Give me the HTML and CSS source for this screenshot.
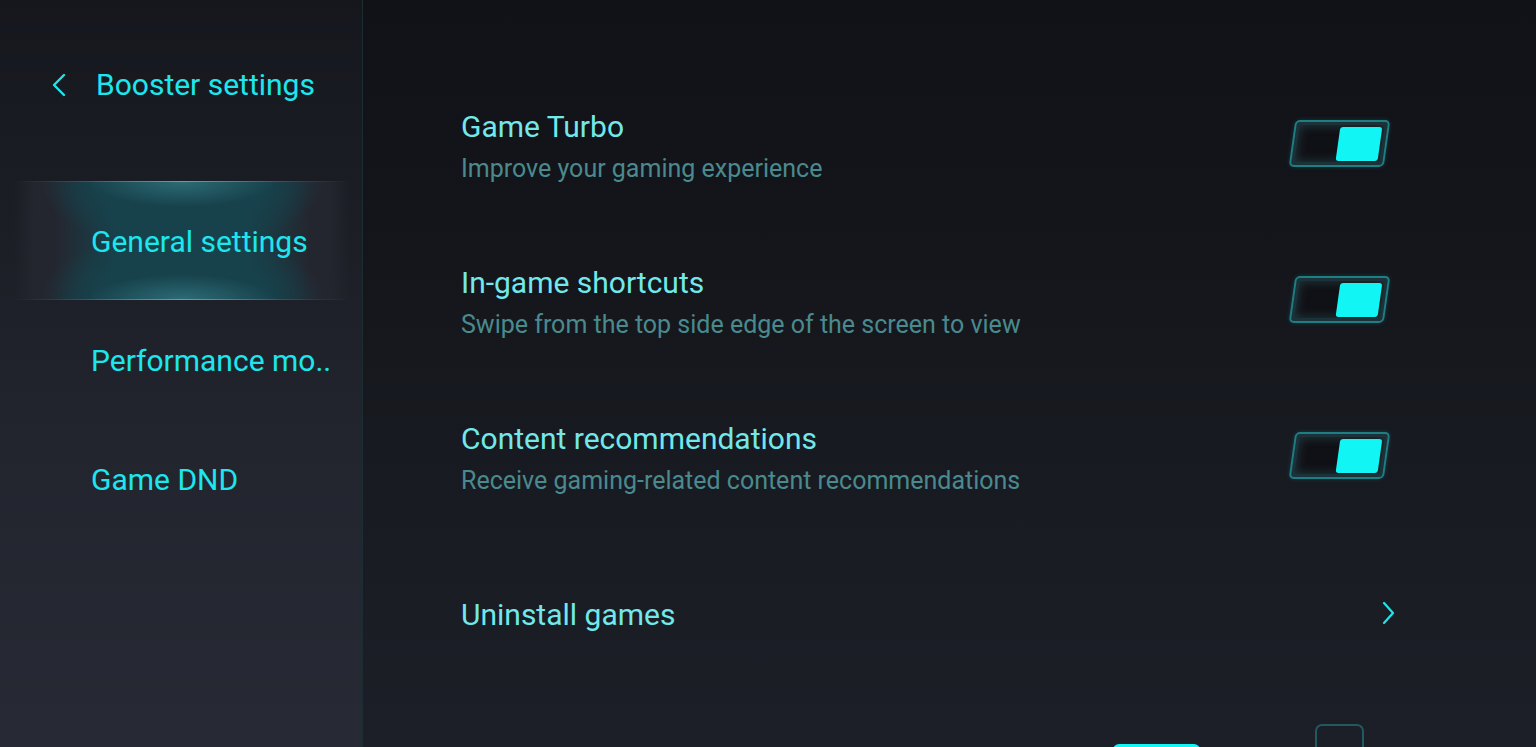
FILE: index.html
```html
<!DOCTYPE html>
<html lang="en">
<head>
<meta charset="utf-8">
<title>Booster settings</title>
<link rel="stylesheet" href="styles.css">
</head>
<body>
<div class="app">
  <aside class="sidebar">
    <div class="header">
      <svg class="back" width="16" height="24" viewBox="0 0 16 24"><polyline points="13,2 3,12 13,22" fill="none" stroke="#1de6ee" stroke-width="2.4" stroke-linecap="round" stroke-linejoin="round"/></svg>
      <span class="header-title">Booster settings</span>
    </div>
    <nav class="nav">
      <div class="nav-item active">General settings</div>
      <div class="nav-item">Performance mo..</div>
      <div class="nav-item">Game DND</div>
    </nav>
  </aside>
  <main class="main">
    <div class="row">
      <div class="text">
        <div class="title">Game Turbo</div>
        <div class="sub">Improve your gaming experience</div>
      </div>
      <div class="toggle"><div class="knob"></div></div>
    </div>
    <div class="row">
      <div class="text">
        <div class="title">In-game shortcuts</div>
        <div class="sub">Swipe from the top side edge of the screen to view</div>
      </div>
      <div class="toggle"><div class="knob"></div></div>
    </div>
    <div class="row">
      <div class="text">
        <div class="title">Content recommendations</div>
        <div class="sub">Receive gaming-related content recommendations</div>
      </div>
      <div class="toggle"><div class="knob"></div></div>
    </div>
    <div class="row link">
      <div class="text">
        <div class="title">Uninstall games</div>
      </div>
      <svg class="chev" width="14" height="24" viewBox="0 0 14 24"><polyline points="2,2 11,12 2,22" fill="none" stroke="#1de6ee" stroke-width="2.2" stroke-linecap="round" stroke-linejoin="round"/></svg>
    </div>
    <div class="peek">
      <div class="peek-bar"></div>
      <div class="peek-box"></div>
    </div>
  </main>
</div>
</body>
</html>
```
FILE: styles.css
```css
html, body {
  margin: 0;
  padding: 0;
  height: 100%;
  overflow: hidden;
  background: #111217;
  font-family: Roboto, "Noto Sans", sans-serif;
}
.app {
  display: flex;
  width: 1536px;
  height: 747px;
}
.sidebar {
  width: 362px;
  flex: none;
  border-right: 1px solid #1c2c33;
  background: linear-gradient(180deg, #15171d 0%, #1b1e25 30%, #22252e 60%, #272a34 100%);
  display: flex;
  flex-direction: column;
}
.header {
  height: 181px;
  box-sizing: border-box;
  padding: 0 0 12px 51px;
  display: flex;
  align-items: center;
}
.back {
  display: block;
  margin-right: 29px;
}
.header-title {
  color: #1de6ee;
  font-size: 30px;
}
.nav {
  display: flex;
  flex-direction: column;
}
.nav-item {
  height: 119px;
  box-sizing: border-box;
  padding: 2px 0 0 91px;
  display: flex;
  align-items: center;
  color: #1de6ee;
  font-size: 30px;
  white-space: nowrap;
}
.nav-item.active {
  margin: 0 12px 0 14px;
  padding-left: 77px;
  background-image:
    linear-gradient(90deg, rgba(42,160,170,0) 0%, rgba(42,160,170,0.3) 20%, #2fb6bf 50%, rgba(42,160,170,0.3) 80%, rgba(42,160,170,0) 100%),
    linear-gradient(90deg, rgba(42,160,170,0) 0%, rgba(42,160,170,0.3) 20%, #2fb6bf 50%, rgba(42,160,170,0.3) 80%, rgba(42,160,170,0) 100%),
    radial-gradient(ellipse 28% 22% at 50% 0%, rgba(70,160,170,0.45), rgba(70,160,170,0) 100%),
    radial-gradient(ellipse 28% 22% at 50% 100%, rgba(70,160,170,0.45), rgba(70,160,170,0) 100%),
    radial-gradient(ellipse 42% 60% at 50% 0%, #17414b 60%, rgba(23,65,75,0) 100%),
    radial-gradient(ellipse 42% 60% at 50% 100%, #17414b 60%, rgba(23,65,75,0) 100%),
    linear-gradient(90deg, rgba(23,65,75,0) 12%, #17414b 30%, #17414b 70%, rgba(23,65,75,0) 88%),
    linear-gradient(90deg, rgba(36,38,47,0) 0%, #24262f 6%, #24262f 94%, rgba(36,38,47,0) 100%);
  background-size: 100% 1px, 100% 1px, 100% 100%, 100% 100%, 100% 100%, 100% 100%, 100% 100%, 100% 100%;
  background-position: top, bottom, 0 0, 0 0, 0 0, 0 0, 0 0, 0 0;
  background-repeat: no-repeat;
}
.main {
  flex: 1;
  display: flex;
  flex-direction: column;
  padding: 67px 146px 0 98px;
  background: linear-gradient(180deg, #111217 0%, #13151a 30%, #181a21 60%, #1c1f27 100%);
}
.row {
  height: 156px;
  flex: none;
  display: flex;
  align-items: center;
  justify-content: space-between;
}
.row.link {
  height: 160px;
}
.text {
  display: flex;
  flex-direction: column;
  padding-top: 3px;
}
.title {
  color: #72e8ea;
  font-size: 30px;
  line-height: 36px;
}
.link .text {
  padding-top: 0;
}
.sub {
  color: #4a8a8e;
  font-size: 25px;
  line-height: 30px;
  margin-top: 9px;
}
.toggle {
  width: 95px;
  height: 47px;
  margin-right: 3px;
  margin-top: -3px;
  box-sizing: border-box;
  border: 2px solid #1f7d84;
  border-radius: 5px;
  transform: skewX(-8deg);
  background: #101116;
  box-shadow: inset 0 0 0 3px #1b3238, inset 0 0 10px 4px #20363c, 0 0 4px rgba(31,125,132,0.35);
  display: flex;
  align-items: center;
  justify-content: flex-end;
  padding-right: 5px;
}
.knob {
  width: 42px;
  height: 34px;
  background: #12f5f5;
  border-radius: 3px;
}
.chev {
  display: block;
  margin-right: -6px;
  margin-top: -4px;
}
.peek {
  display: flex;
  justify-content: flex-end;
  align-items: flex-start;
  gap: 115px;
  padding-right: 26px;
  flex: 1;
}
.peek-bar {
  width: 87px;
  height: 10px;
  margin-top: 49px;
  background: #12f5f5;
  border-radius: 6px 6px 0 0;
}
.peek-box {
  width: 49px;
  height: 40px;
  margin-top: 29px;
  box-sizing: border-box;
  border: 2px solid #1f5a61;
  border-bottom: none;
  border-radius: 7px 7px 0 0;
}
```
